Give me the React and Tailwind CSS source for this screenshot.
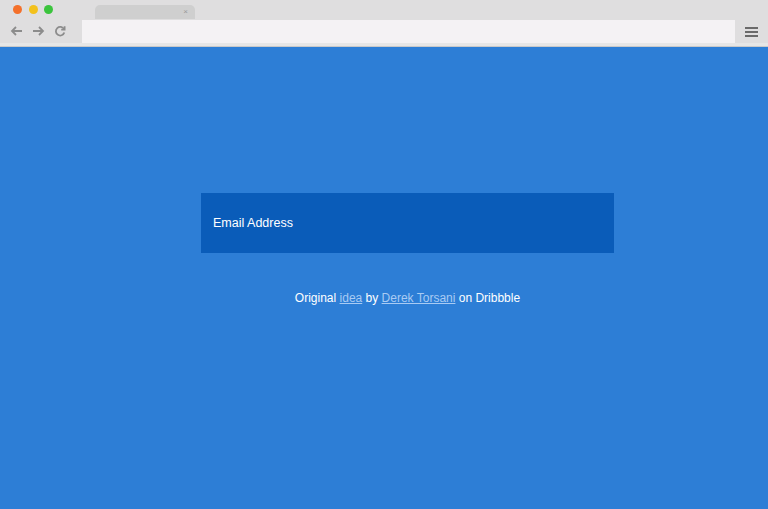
export default function App() {
  return (
    <div className="flex h-[509px] w-[768px] flex-col overflow-hidden bg-[#2d7ed6] font-['Liberation_Sans',Arial,sans-serif]">
      {/* browser chrome */}
      <div className="bg-[#dfdedf]">
        <div className="flex h-[19px] items-center">
          <div className="flex gap-[6.5px] pl-[13px]">
            <span className="h-[9px] w-[9px] rounded-full bg-[#f4702b]" />
            <span className="h-[9px] w-[9px] rounded-full bg-[#f3c11c]" />
            <span className="h-[9px] w-[9px] rounded-full bg-[#3bc43d]" />
          </div>
          <div className="ml-[42px] mt-[5px] flex h-[14px] w-[100px] items-center justify-end rounded-t-[5px] bg-[#cfcfcf] pr-[7px] text-[8px] leading-none text-[#9a9a9a]">
            ×
          </div>
        </div>
        <div className="flex h-[24px] items-center">
          <div className="flex w-[82px] items-center gap-[9px] pl-[10px] text-[#8c8c8c]">
            <svg width="13" height="12" viewBox="0 0 13 12" fill="none" stroke="currentColor" strokeWidth="1.8">
              <path d="M12 6H2M6 2L2 6l4 4" />
            </svg>
            <svg width="13" height="12" viewBox="0 0 13 12" fill="none" stroke="currentColor" strokeWidth="1.8">
              <path d="M1 6h10M7 2l4 4-4 4" />
            </svg>
            <svg width="12" height="12" viewBox="0 0 12 12" fill="none" stroke="currentColor" strokeWidth="1.8">
              <path d="M10 4.2A4.3 4.3 0 1 0 10.3 7.5" />
              <path d="M10.6 1.2v3.4H7.2" />
            </svg>
          </div>
          <div className="h-[23px] w-[653px] bg-[#f4f2f4]" />
          <div className="flex flex-1 flex-col items-center gap-[2px] pt-[1px]">
            <span className="h-[2px] w-[13px] bg-[#6a6a6a]" />
            <span className="h-[2px] w-[13px] bg-[#6a6a6a]" />
            <span className="h-[2px] w-[13px] bg-[#6a6a6a]" />
          </div>
        </div>
        <div className="h-[4px] border-b border-[#c9c9c9] bg-[#e6e6e6]" />
      </div>

      {/* page */}
      <div className="flex-1 pl-[201px] pt-[146px]">
        <div className="flex h-[60px] w-[413px] items-center bg-[#0a5cb9] px-[12px] text-[12.5px] text-white">
          Email Address
        </div>
        <p className="mt-[36px] w-[413px] text-center text-[12px] text-white">
          Original{' '}
          <a href="#" className="text-[#a9cbf3] underline">idea</a>{' '}
          by{' '}
          <a href="#" className="text-[#a9cbf3] underline">Derek Torsani</a>{' '}
          on Dribbble
        </p>
      </div>
    </div>
  )
}
